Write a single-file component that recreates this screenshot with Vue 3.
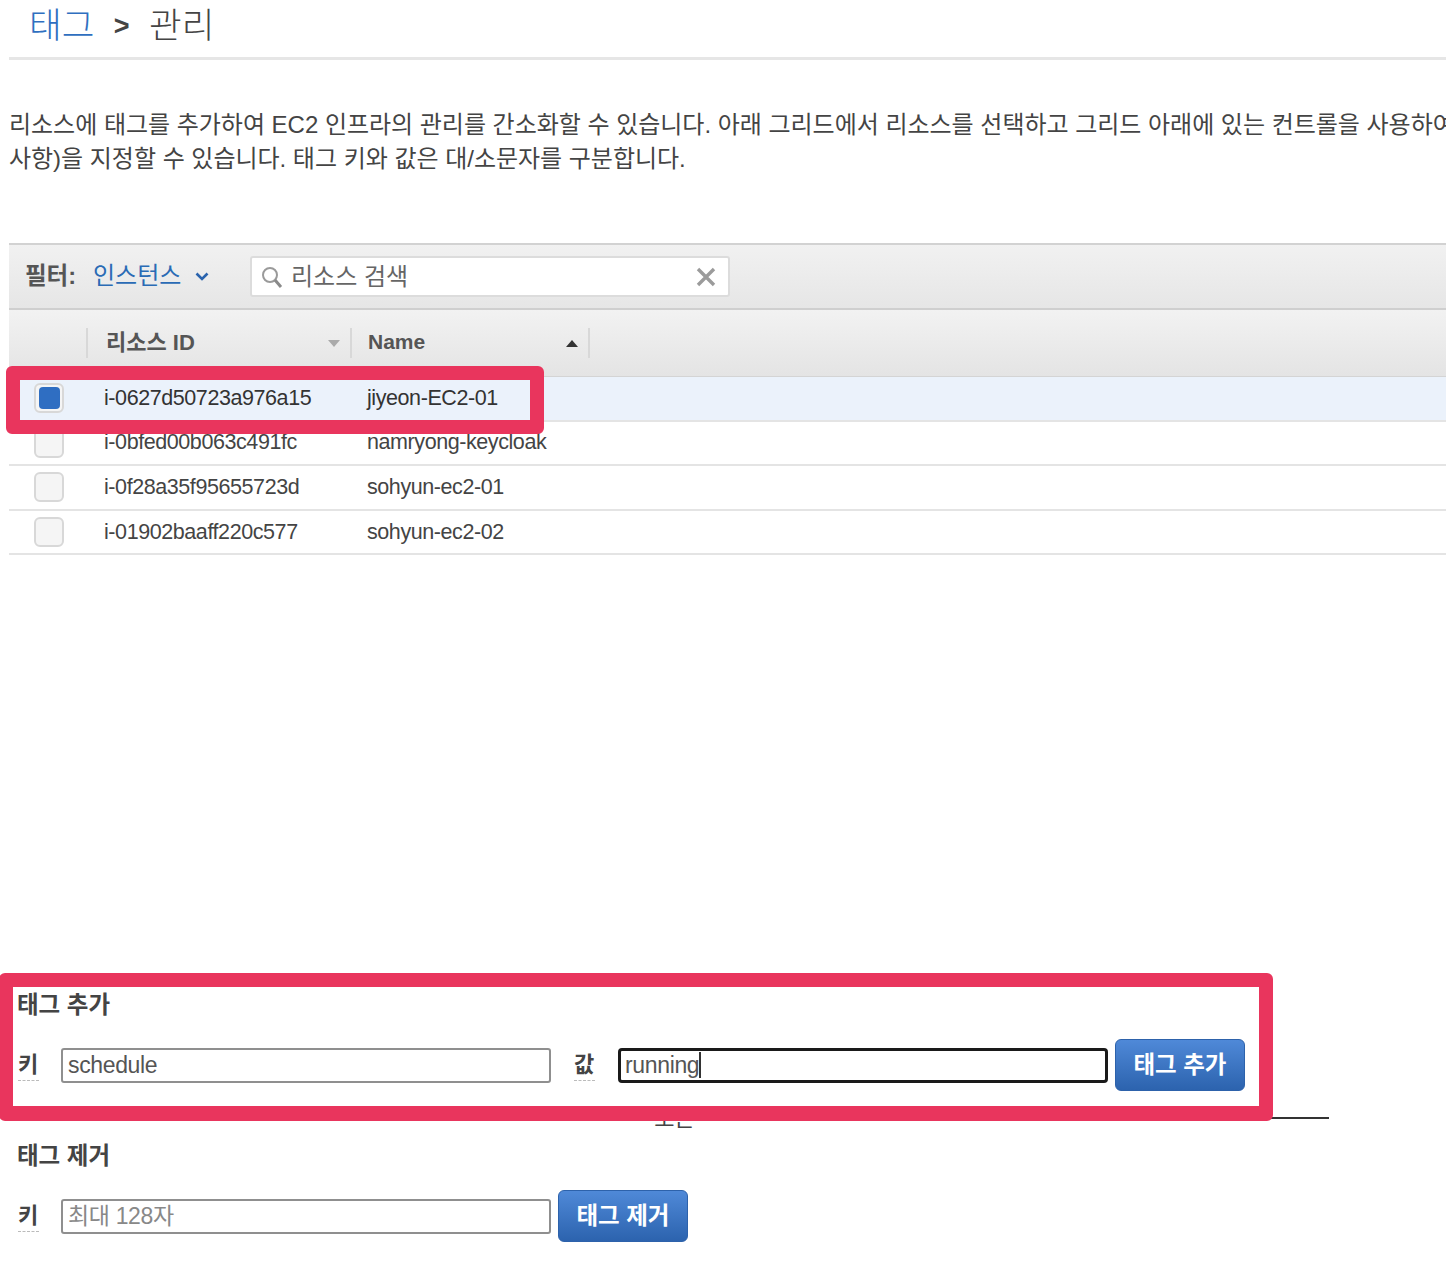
<script setup>
const rows = [
  { id: 'i-0627d50723a976a15', name: 'jiyeon-EC2-01', selected: true },
  { id: 'i-0bfed00b063c491fc', name: 'namryong-keycloak', selected: false },
  { id: 'i-0f28a35f95655723d', name: 'sohyun-ec2-01', selected: false },
  { id: 'i-01902baaff220c577', name: 'sohyun-ec2-02', selected: false },
]
</script>

<template>
  <div class="page">
    <h1 class="title"><span class="crumb">태그</span><span class="gt">&gt;</span><span>관리</span></h1>
    <p class="desc">리소스에 태그를 추가하여 EC2 인프라의 관리를 간소화할 수 있습니다. 아래 그리드에서 리소스를 선택하고 그리드 아래에 있는 컨트롤을 사용하여 태그(키와 선택 사항)<br />사항)을 지정할 수 있습니다. 태그 키와 값은 대/소문자를 구분합니다.</p>

    <div class="filter">
      <span class="filter-label">필터:</span>
      <span class="filter-value">인스턴스</span>
      <svg class="chev" width="14" height="9" viewBox="0 0 14 9"><path d="M1.5 1.5 7 7l5.5-5.5" fill="none" stroke="#2a63ad" stroke-width="2.6" /></svg>
      <div class="search">
        <svg class="glass" width="24" height="24" viewBox="0 0 24 24"><circle cx="10" cy="10" r="7" fill="none" stroke="#9a9a9a" stroke-width="2" /><path d="m15 15 6 7" stroke="#8a8a8a" stroke-width="3" /></svg>
        <span class="search-text">리소스 검색</span>
        <svg class="clear" width="20" height="20" viewBox="0 0 20 20"><path d="m2 2 16 16M18 2 2 18" stroke="#9b9b9b" stroke-width="3.4" /></svg>
      </div>
    </div>

    <div class="thead">
      <div class="th th-check"></div>
      <div class="th th-id">
        <span class="th-ko">리소스 ID</span>
        <svg width="12" height="7" viewBox="0 0 12 7"><path d="M0 0h12L6 7z" fill="#aaa" /></svg>
      </div>
      <div class="th th-name">
        <span class="th-en">Name</span>
        <svg width="12" height="7" viewBox="0 0 12 7"><path d="M0 7h12L6 0z" fill="#333" /></svg>
      </div>
    </div>

    <div v-for="row in rows" :key="row.id" class="row" :class="{ selected: row.selected }">
      <div class="check-cell"><span class="check"><i v-if="row.selected"></i></span></div>
      <div class="cell-id">{{ row.id }}</div>
      <div class="cell-name">{{ row.name }}</div>
    </div>

    <section class="form add">
      <h2>태그 추가</h2>
      <div class="form-row">
        <span class="key">키</span>
        <div class="input">schedule</div>
        <span class="key val">값</span>
        <div class="input focus">running<i class="caret"></i></div>
        <button class="btn">태그 추가</button>
      </div>
    </section>

    <div class="or"><span>또는</span></div>

    <section class="form remove">
      <h2>태그 제거</h2>
      <div class="form-row">
        <span class="key">키</span>
        <div class="input placeholder">최대 128자</div>
        <button class="btn">태그 제거</button>
      </div>
    </section>

    <div class="mark mark-row"></div>
    <div class="mark mark-form"></div>
  </div>
</template>

<style scoped>
.page {
  position: relative;
  width: 1446px;
  height: 1266px;
  overflow: hidden;
  padding-left: 9px;
  box-sizing: border-box;
  background: #fff;
  color: #444;
  font-family: "Liberation Sans", "Noto Sans CJK KR", sans-serif;
}
.title {
  margin: 0;
  padding-left: 20px;
  padding-top: 2px;
  box-sizing: border-box;
  display: flex;
  align-items: flex-start;
  gap: 19.5px;
  font-size: 35.5px;
  font-weight: 300;
  color: #444;
  line-height: 48px;
  border-bottom: 3px solid #e6e6e6;
  height: 60px;
}
.crumb { color: #2f6fc0; }
.gt { font-size: 27px; font-weight: 700; color: #444; }
.desc {
  margin: 48px 0 0;
  height: 135px;
  font-size: 24px;
  line-height: 34px;
  white-space: nowrap;
  color: #444;
  letter-spacing: -0.02px;
}
.filter {
  height: 67px;
  box-sizing: border-box;
  display: flex;
  align-items: center;
  padding-left: 16px;
  background: linear-gradient(#f1f1f1, #e6e6e6);
  border-top: 2px solid #d2d2d2;
  border-bottom: 2px solid #cfcfcf;
  font-size: 24px;
}
.filter-label { font-weight: 700; font-size: 23.5px; color: #555; width: 68px; margin-bottom: 6px; }
.filter-value { color: #2a6bb5; width: 102px; margin-bottom: 6px; }
.chev { margin-right: 41px; }
.search {
  width: 480px;
  height: 41px;
  box-sizing: border-box;
  display: flex;
  align-items: center;
  padding: 0 12px 0 9px;
  background: #fff;
  border: 2px solid #dcdcdc;
  border-radius: 3px;
  color: #666;
}
.glass { margin-left: -1px; }
.search-text { margin-left: 7px; margin-bottom: 4px; flex: 1; }
.thead {
  height: 67px;
  display: flex;
  align-items: center;
  background: linear-gradient(#f2f2f2, #e4e4e4);
  border-bottom: 1px solid #d4d4d4;
  box-sizing: border-box;
  font-size: 21px;
  font-weight: 700;
  color: #555;
}
.th-ko { font-size: 22px; margin-bottom: 6px; }
.th-en { margin-bottom: 2px; }
.th { height: 30px; box-sizing: border-box; display: flex; align-items: center; justify-content: space-between; border-right: 2px solid #d8d8d8; }
.th-check { width: 79px; }
.th-id { width: 264px; padding: 0 10px 0 18px; }
.th-name { width: 238px; padding: 0 10px 0 16px; }
.row {
  height: 44.6px;
  display: flex;
  align-items: center;
  box-sizing: border-box;
  border-bottom: 2px solid #e4e4e4;
  font-size: 21.5px;
  letter-spacing: -0.42px;
  color: #444;
}
.row.selected { background: #ebf2fb; color: #333; }
.check-cell { width: 95px; padding-left: 25px; box-sizing: border-box; }
.check {
  display: flex;
  align-items: center;
  justify-content: center;
  width: 30px;
  height: 30px;
  box-sizing: border-box;
  border: 2px solid #d8d8d8;
  border-radius: 6px;
  background: #f5f5f5;
}
.check i { display: block; width: 21px; height: 22px; border-radius: 4px; background: #2f6ec2; }
.cell-id { width: 263px; }
.form h2 { margin: 0 0 0 -1px; font-size: 23.5px; font-weight: 700; color: #444; line-height: 32px; }
.form { padding-left: 9px; }
.add { margin-top: 434px; }
.form-row { display: flex; align-items: center; }
.add .form-row { margin-top: 18px; height: 52px; }
.remove { margin-top: 21px; }
.remove .form-row { margin-top: 18px; height: 52px; }
.key {
  width: 21px;
  margin-right: 22px;
  font-size: 22px;
  font-weight: 700;
  line-height: 30px;
  border-bottom: 1px dashed #bbb;
  color: #444;
}
.val { margin-left: 23px; margin-right: 23px; }
.input {
  width: 490px;
  height: 35px;
  box-sizing: border-box;
  border: 2px solid #8f8f8f;
  border-radius: 3px;
  padding-left: 5px;
  font-size: 23px;
  letter-spacing: -0.35px;
  line-height: 31px;
  color: #555;
  background: #fff;
}
.focus { border: 3px solid #1a1a1a; padding-left: 4px; line-height: 29px; border-radius: 4px; margin-right: 7px; }
.caret { display: inline-block; width: 2px; height: 26px; background: #333; vertical-align: -5px; }
.placeholder { color: #888; margin-right: 7px; }
.btn {
  width: 130px;
  height: 52px;
  padding: 0 0 5px;
  border: 1px solid #2d62ab;
  border-radius: 6px;
  background: linear-gradient(#4f89d8, #2c63ae);
  color: #fff;
  font-family: inherit;
  font-size: 23.5px;
  font-weight: 700;
}
.or {
  position: relative;
  margin: 26px 0 0 11px;
  width: 1309px;
  height: 2px;
  background: #333;
  text-align: center;
}
.or span {
  display: inline-block;
  position: relative;
  top: -13px;
  padding: 0 8px;
  background: #fff;
  font-size: 22px;
  line-height: 30px;
  color: #444;
}
.mark {
  position: absolute;
  box-sizing: border-box;
  border: 14px solid #e9355d;
  border-radius: 6px;
}
.mark-row { left: 6px; top: 366px; width: 538px; height: 68px; }
.mark-form { left: -1px; top: 973px; width: 1274px; height: 148px; border-bottom-width: 15px; }
</style>
